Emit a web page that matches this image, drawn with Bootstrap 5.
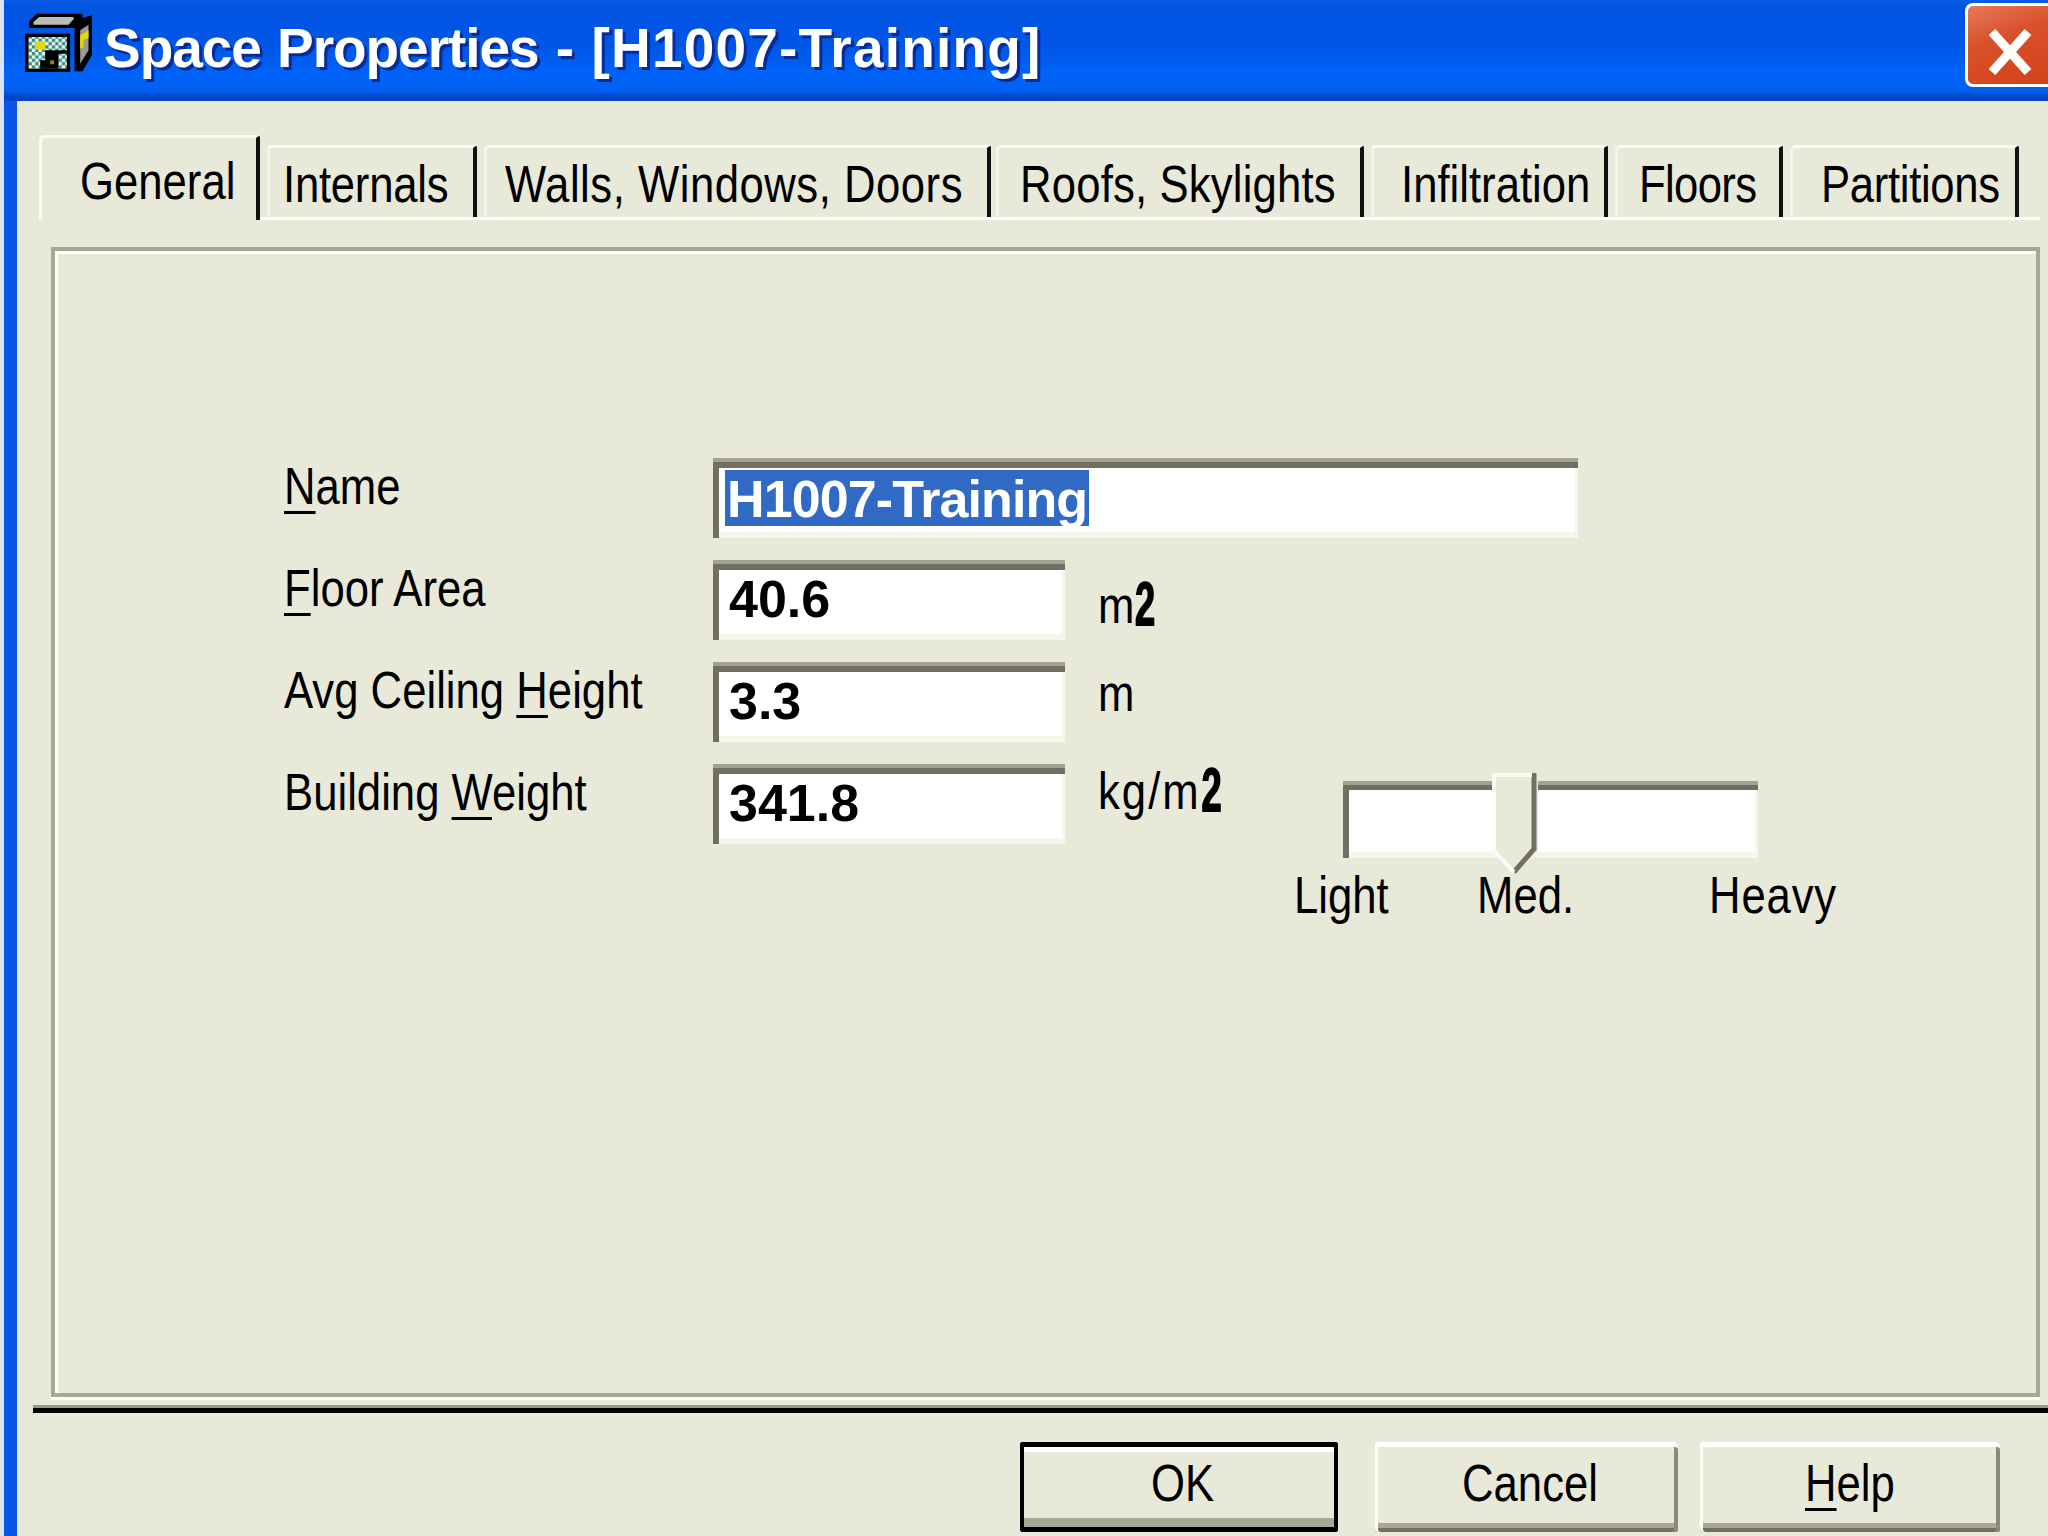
<!DOCTYPE html>
<html lang="en">
<head>
<meta charset="utf-8">
<title>Space Properties</title>
<link href="https://cdn.jsdelivr.net/npm/bootstrap@5.3.0/dist/css/bootstrap.min.css" rel="stylesheet">
<style>
html,body{margin:0;width:2048px;height:1536px;overflow:hidden;background:#dbe3f6}
body{font-family:"Liberation Sans",Arial,sans-serif;color:#000;font-size:52px;line-height:60px}
.xp-win{margin-left:4px;width:2044px;height:1536px}
.xp-title{height:101px;padding-left:21px;background:linear-gradient(180deg,#0a5ce6 0,#0054e2 6%,#0056e6 45%,#0064fa 75%,#0060f0 90%,#0042c4 96%,#0148cc 100%)}
.xp-icon{width:67px;height:60px;margin-top:12px;flex:none}
.xp-caption{margin-left:12px;margin-top:17px;font-size:55px;line-height:62px;font-weight:700;color:#fff;text-shadow:3px 3px 0 #0a2a96;white-space:nowrap;word-spacing:2px}
.cap-a{letter-spacing:-1.05px}
.cap-b{letter-spacing:1.2px}
.xp-close{width:83px;height:84px;margin-top:3px;border:3px solid #fff;border-right:0;border-radius:8px 0 0 8px;background:linear-gradient(160deg,#e8795a 0,#d9512b 40%,#d2421a 100%);flex:none;padding:0}
.xp-close svg{display:block;width:48px;height:48px;margin:14px 0 0 18px}
.xp-main{height:1435px;border-left:13px solid #0a55e6;background:#e9e9da;padding-top:34px}
.ztxt{display:inline-block;transform:scaleX(.84);transform-origin:left center;white-space:nowrap}
.ztxt u{text-decoration-thickness:3px;text-underline-offset:7px;text-decoration-skip-ink:none}
.xp-tabs.nav-tabs{margin-left:22px;width:2001px;height:85px;flex-wrap:nowrap;align-items:flex-end;border-bottom:3px solid #fff;border-radius:0}
.xp-tabs .nav-item{flex:none}
.xp-tabs .nav-link,.xp-tabs .nav-link:hover{display:block;height:72px;margin:0;padding:6px 0 0;background:#e9e9da;color:#000;border:0;border-top:3px solid #fbfbf5;border-left:3px solid #f4f4ea;border-right:4px solid #111;border-radius:5px 3px 0 0;white-space:nowrap}
.xp-tabs .nav-link.active{height:85px;margin-bottom:-3px;padding-top:13px;background:#e9e9da;color:#000;border-top:3px solid #fbfbf5;border-left:3px solid #fbfbf5;border-right:4px solid #111}
.tab-a{width:221px}.tab-a .nav-link{padding-left:38px!important}
.tab-b{width:210px;margin-left:7px}.tab-b .nav-link{padding-left:13px}
.tab-c{width:507px;margin-left:7px}.tab-c .nav-link{padding-left:18px}
.tab-d{width:368px;margin-left:5px}.tab-d .nav-link{padding-left:21px}
.tab-e{width:237px;margin-left:7px}.tab-e .nav-link{padding-left:27px}
.tab-f{width:168px;margin-left:7px}.tab-f .nav-link{padding-left:21px}
.tab-g{width:229px;margin-left:7px}.tab-g .nav-link{padding-left:28px}
.tab-b .ztxt{letter-spacing:-.3px}
.tab-c .ztxt{letter-spacing:.6px}
.tab-d .ztxt{letter-spacing:.2px}
.tab-f .ztxt{letter-spacing:-.8px}
.tab-g .ztxt{letter-spacing:-.4px}
.xp-panel{margin:27px 0 0 34px;width:1989px;height:1150px;border:4px solid #a8a796;box-shadow:inset 3px 3px 0 #fff,0 3px 0 #fff;padding:207px 0 0 229px}
.frm-row{height:80px;margin-bottom:22px}
.frm-label{width:429px;margin-top:-2px;flex:none}
.xp-field{padding:4px 4px 0 16px;background:#fff;border:0;border-radius:0;height:80px;font-size:52px;line-height:60px;font-weight:700;color:#000;box-shadow:inset 0 4px 0 #a3a291,inset 0 10px 0 #716f64,inset 6px 0 0 #716f64,inset 0 -6px 0 #f6f6ec,inset -3px 0 0 #f6f6ec;flex:none}
.xp-field.form-control{min-height:0}
.field-w{width:865px;padding-left:12px}
.field-n{width:352px;padding-top:9px}
.xp-sel{display:inline-block;height:56px;margin-top:8px;padding:0 2px;line-height:58px;background:#316ac5;color:#fff;letter-spacing:-.9px}
.frm-unit{margin:-3px 0 0 33px;width:245px;flex:none;white-space:nowrap}
.unit-low{margin-top:15px}
.unit-mid{margin-top:1px}
.unit-wide{letter-spacing:2.4px}
.sup-two{display:inline-block;width:26px;font-size:125px;line-height:0;font-weight:700;vertical-align:-45px;transform:scaleX(.62);transform-origin:left;letter-spacing:0}
.xp-slider{width:415px;margin-top:17px;flex:none;position:relative}
.xp-track{height:77px;background:#fff;box-shadow:inset 0 4px 0 #a3a291,inset 0 9px 0 #716f64,inset 6px 0 0 #716f64,inset 0 -6px 0 #f6f6ec,inset -3px 0 0 #f6f6ec}
.xp-thumb{position:absolute;left:149px;top:-8px;width:46px;height:101px}
.xp-scale{width:541px;margin:7px 0 0 -49px;height:60px;line-height:60px}
.scale-mid{margin-left:70px}.scale-end{margin-left:117px}
.scale-end.ztxt{letter-spacing:1px}
.xp-rule{margin:8px 0 0 16px;height:8px;background:#000;border-top:3px solid #9a9988}
.xp-actions{margin-top:29px;padding-right:48px}
.xp-btn.btn{height:90px;width:303px;margin-left:22px;padding:0 0 8px;border:0;border-radius:3px;background:#e9e9da;color:#000;font-size:52px;line-height:58px;box-shadow:inset 0 5px 0 #fff,inset 3px 0 0 #fdfdf8,inset -4px 0 0 #8b8a7a,inset 0 -4px 0 #716f64,inset 0 -9px 0 #a8a796;text-align:left}
.xp-btn.btn.is-default{width:318px;margin-left:0;margin-right:15px;padding-left:131px;box-shadow:inset 0 5px 0 #000,inset 4px 0 0 #000,inset -4px 0 0 #000,inset 0 -5px 0 #000,inset 0 10px 0 #fff,inset 0 -14px 0 #a8a796}
.pad-c{padding-left:87px!important}
.pad-h{width:300px!important;padding-left:105px!important}
</style>
</head>
<body>
<div class="xp-win d-flex flex-column">
  <div class="xp-title d-flex align-items-start">
    <svg class="xp-icon" viewBox="0 0 200 180" aria-hidden="true">
      <defs><pattern id="chk" width="20" height="20" patternUnits="userSpaceOnUse"><rect width="20" height="20" fill="#f4f8f4"/><rect width="10" height="10" fill="#2f8f88"/><rect x="10" y="10" width="10" height="10" fill="#2f8f88"/></pattern></defs>
      <polygon points="35,5 172,5 172,22 150,48 12,48 12,28" fill="#000"/>
      <polygon points="42,15 145,15 145,22 130,38 25,38 25,30" fill="#bdbdb8"/>
      <rect x="0" y="65" width="135" height="115" fill="#000"/>
      <rect x="10" y="75" width="115" height="95" fill="url(#chk)"/>
      <rect x="30" y="88" width="30" height="25" fill="#e8d800"/>
      <polygon points="60,115 125,115 125,125 100,125 100,170 45,170 45,145 60,145" fill="#000"/>
      <rect x="75" y="145" width="12" height="12" fill="#8a8a10"/>
      <polygon points="148,50 172,18 200,10 200,130 172,178 148,178" fill="#000"/>
      <polygon points="165,55 190,38 190,115 165,155" fill="#9a9a96"/>
      <polygon points="165,70 190,55 190,78 175,85 175,105 165,110" fill="#e8d800"/>
    </svg>
    <div class="xp-caption"><span class="cap-a">Space Properties</span> - <span class="cap-b">[H1007-Training]</span></div>
    <button class="xp-close ms-auto" type="button" aria-label="Close">
      <svg viewBox="0 0 48 48"><path d="M6 4 L42 44 M42 4 L6 44" fill="none" stroke="#fff" stroke-width="9"/></svg>
    </button>
  </div>
  <div class="xp-main">
    <ul class="nav nav-tabs xp-tabs">
      <li class="nav-item tab-a"><a class="nav-link active"><span class="ztxt">General</span></a></li>
      <li class="nav-item tab-b"><a class="nav-link"><span class="ztxt">Internals</span></a></li>
      <li class="nav-item tab-c"><a class="nav-link"><span class="ztxt">Walls, Windows, Doors</span></a></li>
      <li class="nav-item tab-d"><a class="nav-link"><span class="ztxt">Roofs, Skylights</span></a></li>
      <li class="nav-item tab-e"><a class="nav-link"><span class="ztxt">Infiltration</span></a></li>
      <li class="nav-item tab-f"><a class="nav-link"><span class="ztxt">Floors</span></a></li>
      <li class="nav-item tab-g"><a class="nav-link"><span class="ztxt">Partitions</span></a></li>
    </ul>
    <div class="xp-panel">
      <div class="frm-row d-flex">
        <div class="frm-label"><span class="ztxt"><u>N</u>ame</span></div>
        <div class="form-control xp-field field-w"><span class="xp-sel">H1007-Training</span></div>
      </div>
      <div class="frm-row d-flex">
        <div class="frm-label"><span class="ztxt"><u>F</u>loor Area</span></div>
        <div class="form-control xp-field field-n">40.6</div>
        <div class="frm-unit unit-low"><span class="ztxt">m<span class="sup-two">²</span></span></div>
      </div>
      <div class="frm-row d-flex">
        <div class="frm-label"><span class="ztxt">Avg Ceiling <u>H</u>eight</span></div>
        <div class="form-control xp-field field-n">3.3</div>
        <div class="frm-unit unit-mid"><span class="ztxt">m</span></div>
      </div>
      <div class="frm-row d-flex">
        <div class="frm-label"><span class="ztxt">Building <u>W</u>eight</span></div>
        <div class="form-control xp-field field-n">341.8</div>
        <div class="frm-unit"><span class="ztxt unit-wide">kg/m<span class="sup-two">²</span></span></div>
        <div class="xp-slider">
          <div class="xp-track"></div>
          <svg class="xp-thumb" viewBox="0 0 46 101" aria-hidden="true">
            <polygon points="0,0 40,0 46,0 46,78 22,101 0,78" fill="#e9e9da"/>
            <path d="M42 0 V76 L22 99" fill="none" stroke="#716f64" stroke-width="5"/>
            <path d="M2 0 V78 L22 99" fill="none" stroke="#fbfbf5" stroke-width="4"/>
            <path d="M0 2 H40" stroke="#fbfbf5" stroke-width="4"/>
          </svg>
          <div class="xp-scale d-flex">
            <span class="ztxt">Light</span>
            <span class="ztxt scale-mid">Med.</span>
            <span class="ztxt scale-end">Heavy</span>
          </div>
        </div>
      </div>
    </div>
    <div class="xp-rule"></div>
    <div class="xp-actions d-flex justify-content-end">
      <button class="btn xp-btn is-default" type="button"><span class="ztxt">OK</span></button>
      <button class="btn xp-btn pad-c" type="button"><span class="ztxt">Cancel</span></button>
      <button class="btn xp-btn pad-h" type="button"><span class="ztxt"><u>H</u>elp</span></button>
    </div>
  </div>
</div>
<script src="https://cdn.jsdelivr.net/npm/bootstrap@5.3.0/dist/js/bootstrap.bundle.min.js"></script>
</body>
</html>
